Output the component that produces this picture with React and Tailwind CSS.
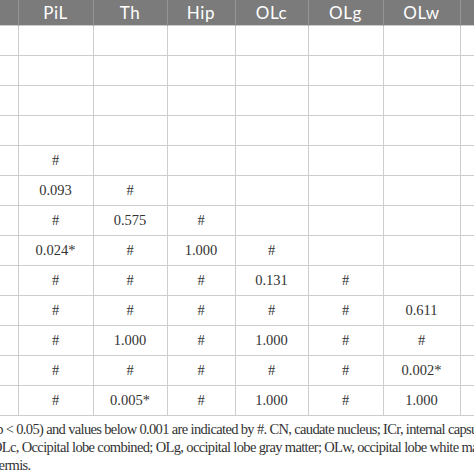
import React from "react";

const cols = ["", "PiL", "Th", "Hip", "OLc", "OLg", "OLw", ""];
const widths = ["w-[18px]", "w-[75px]", "w-[74px]", "w-[68px]", "w-[73px]", "w-[75px]", "w-[77px]", "w-[40px]"];

const rows = [
  [],
  [],
  [],
  [],
  ["#"],
  ["0.093", "#"],
  ["#", "0.575", "#"],
  ["0.024*", "#", "1.000", "#"],
  ["#", "#", "#", "0.131", "#"],
  ["#", "#", "#", "#", "#", "0.611"],
  ["#", "1.000", "#", "1.000", "#", "#"],
  ["#", "#", "#", "#", "#", "0.002*"],
  ["#", "0.005*", "#", "1.000", "#", "1.000"],
];

export default function App() {
  return (
    <div className="w-[474px] h-[474px] overflow-hidden bg-white">
      <table className="table-fixed border-collapse w-[500px]">
        <colgroup>
          {widths.map((w, i) => (
            <col key={i} className={w} />
          ))}
        </colgroup>
        <thead>
          <tr className="h-[25px] bg-[#7b7b7b]">
            {cols.map((c, i) => (
              <th
                key={i}
                className={`p-0 text-center align-middle font-normal text-white text-[17px] tracking-[0.6px] leading-none border-x border-[#959595] ${i === 0 ? "border-l-0" : ""}`}
                style={{ fontFamily: "Lato, 'Open Sans', sans-serif" }}
              >
                {c}
              </th>
            ))}
          </tr>
        </thead>
        <tbody>
          {rows.map((r, ri) => (
            <tr key={ri} className="h-[30px]">
              {cols.map((_, ci) => (
                <td
                  key={ci}
                  className={`p-0 text-center align-middle text-[14.5px] leading-none text-[#333333] border border-[#cdcdcd] ${ci === 0 ? "border-l-0" : ""}`}
                  style={{ fontFamily: "'Liberation Serif', serif" }}
                >
                  {ci >= 1 && ci <= 6 ? r[ci - 1] || "" : ""}
                </td>
              ))}
            </tr>
          ))}
        </tbody>
      </table>
      <div
        className="ml-[-8px] pt-[4px] text-[14.5px] tracking-[-0.65px] leading-[18px] text-[#333333] whitespace-nowrap"
        style={{ fontFamily: "'Liberation Serif', serif" }}
      >
        <div>(p &lt; 0.05) and values below 0.001 are indicated by #. CN, caudate nucleus; ICr, internal capsule</div>
        <div>OLc, Occipital lobe combined; OLg, occipital lobe gray matter; OLw, occipital lobe white matter</div>
        <div>vermis.</div>
      </div>
    </div>
  );
}
